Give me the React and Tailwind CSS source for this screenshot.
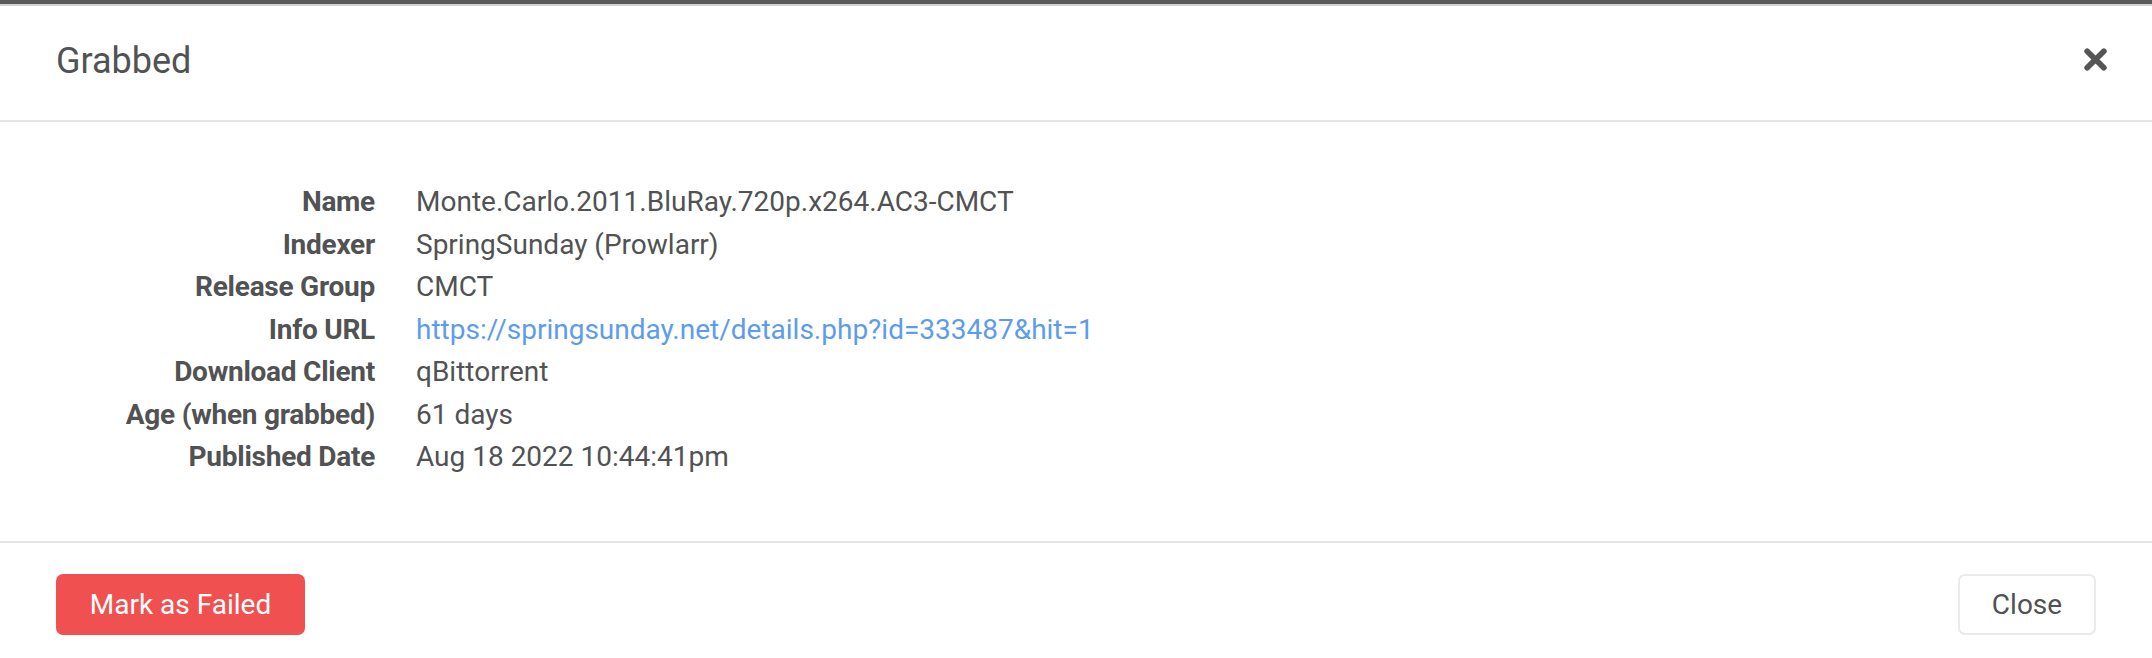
import React from 'react';

// grabbed history details, modal content
const rows = [
  { label: 'Name', value: 'Monte.Carlo.2011.BluRay.720p.x264.AC3-CMCT' },
  { label: 'Indexer', value: 'SpringSunday (Prowlarr)' },
  { label: 'Release Group', value: 'CMCT' },
  { label: 'Info URL', value: 'https://springsunday.net/details.php?id=333487&hit=1', link: true },
  { label: 'Download Client', value: 'qBittorrent' },
  { label: 'Age (when grabbed)', value: '61 days' },
  { label: 'Published Date', value: 'Aug 18 2022 10:44:41pm' },
];

const App = () => {
  return (
    <div className="w-[2152px] h-[658px] bg-white text-[#515253] font-['Roboto',sans-serif] flex flex-col overflow-hidden">
      {/* top edge of the page behind */}
      <div className="h-[4px] bg-[#5a5a5a]" />
      <div className="h-[2px] bg-[#d4d4d4]" />

      {/* header */}
      <div className="h-[116px] flex items-center justify-between pl-[56px] pr-[44px] border-b-2 border-[#e5e5e5]">
        <h2 className="text-[36px] leading-none pb-[4px]">Grabbed</h2>
        <button type="button" className="w-[25px] h-[25px] text-[#555] mb-[8px]">
          <svg viewBox="0 0 24 24" className="w-[25px] h-[25px]">
            <path d="M4 4L20 20M20 4L4 20" stroke="currentColor" strokeWidth="5.5" strokeLinecap="round" />
          </svg>
        </button>
      </div>

      {/* body */}
      <div className="h-[421px] px-[56px] pt-[59px] border-b-2 border-[#e5e5e5]">
        <dl className="flex flex-col">
          {rows.map(row => (
            <div key={row.label} className="flex h-[42.5px] items-center text-[28px]">
              <dt className="w-[319px] text-right font-bold tracking-[-0.25px]">{row.label}</dt>
              <dd className="ml-[41px]">
                {row.link ? (
                  <a href="#" className="text-[#5d9cec]">{row.value}</a>
                ) : row.value}
              </dd>
            </div>
          ))}
        </dl>
      </div>

      {/* footer */}
      <div className="flex justify-between px-[56px] pt-[31px]">
        <button type="button" className="w-[249px] h-[61px] rounded-[7px] bg-[#f05050] text-white text-[28px]">
          Mark as Failed
        </button>
        <button type="button" className="w-[138px] h-[61px] rounded-[7px] border-2 border-[#eaeaea] bg-white text-[28px]">
          Close
        </button>
      </div>
    </div>
  );
};

export default App;
